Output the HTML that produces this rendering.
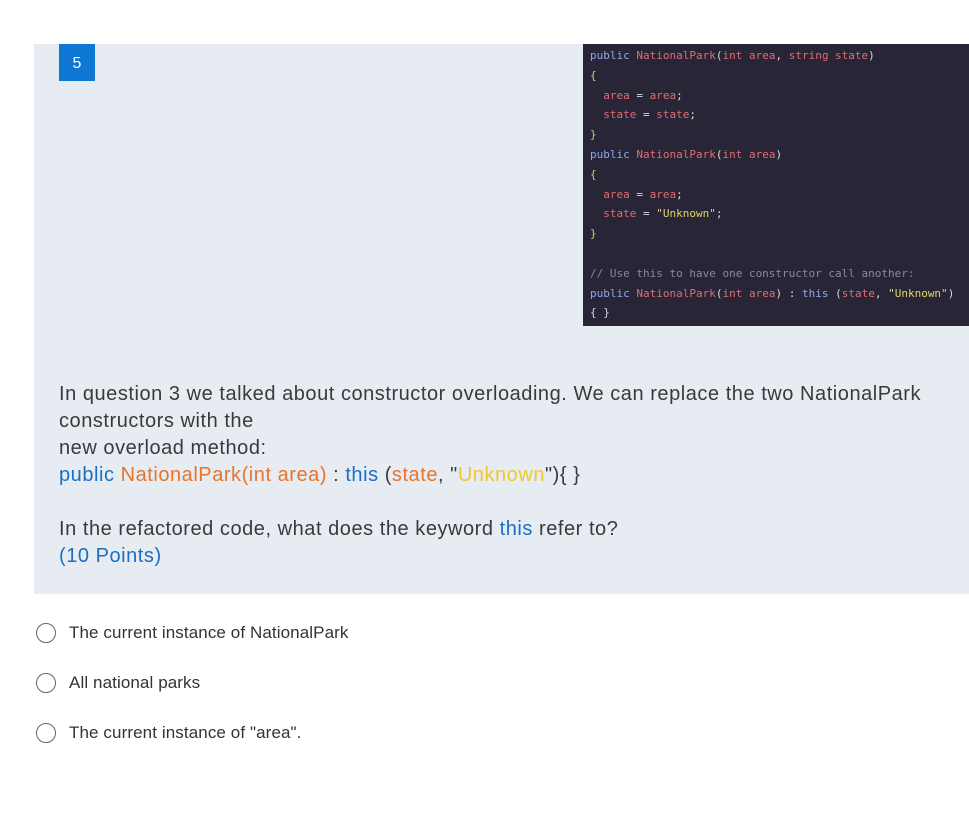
<!DOCTYPE html>
<html><head><meta charset="utf-8"><style>
body{margin:0;width:969px;height:830px;background:#fff;position:relative;overflow:hidden;font-family:"Liberation Sans",sans-serif}
.panel{position:absolute;left:34px;top:44px;width:935px;height:550px;background:#e6ecf2}
.badge{position:absolute;left:59px;top:44px;width:36px;height:37px;background:#0f78d4;color:#fff;font-size:16px;text-align:center;line-height:40px}
.code{position:absolute;left:583px;top:44px;width:386px;height:282px;background:#272536;font-family:"DejaVu Sans Mono",monospace;font-size:11px;line-height:19.8px;padding:2px 0 0 7px;box-sizing:border-box;white-space:pre;color:#e06c75}
.k{color:#8fa8f0}.p{color:#d8d8e8}.s{color:#e5d36a}.c{color:#8a8a9a}.b{color:#e0c070}
.txt{position:absolute;left:59px;top:381px;width:900px;font-size:20px;line-height:27px;color:#3a3a3a;letter-spacing:0.54px}
.bl{color:#1a6fc4}.or{color:#e6742c}.yl{color:#f0c82c}
.opt{position:absolute;left:36px;font-size:17px;color:#333;letter-spacing:0.1px}
.opt i{position:absolute;left:0;top:0;width:20px;height:20px;border:1.5px solid #666;border-radius:50%;box-sizing:border-box}
.opt span{position:absolute;left:33px;top:0;white-space:nowrap;line-height:20px}
</style></head><body>
<div class="panel"></div>
<div class="badge">5</div>
<div class="code"><span class="k">public</span> NationalPark<span class="p">(</span>int area<span class="p">,</span> string state<span class="p">)</span>
<span class="b">{</span>
  area <span class="p">=</span> area<span class="p">;</span>
  state <span class="p">=</span> state<span class="p">;</span>
<span class="b">}</span>
<span class="k">public</span> NationalPark<span class="p">(</span>int area<span class="p">)</span>
<span class="b">{</span>
  area <span class="p">=</span> area<span class="p">;</span>
  state <span class="p">=</span> <span class="s">"Unknown"</span><span class="p">;</span>
<span class="b">}</span>

<span class="c">// Use this to have one constructor call another:</span>
<span class="k">public</span> NationalPark<span class="p">(</span>int area<span class="p">)</span> <span class="p">:</span> <span class="k">this</span> <span class="p">(</span>state<span class="p">,</span> <span class="s">"Unknown"</span><span class="p">)</span>
<span class="p">{ }</span></div>
<div class="txt">In question 3 we talked about constructor overloading. We can replace the two NationalPark<br>constructors with the<br>new overload method:<br><span class="bl">public</span> <span class="or">NationalPark(int area)</span> : <span class="bl">this</span> (<span class="or">state</span>, "<span class="yl">Unknown</span>"){ }<br><br>In the refactored code, what does the keyword <span class="bl">this</span> refer to?<br><span class="bl">(10 Points)</span></div>
<div class="opt" style="top:623px"><i></i><span>The current instance of NationalPark</span></div>
<div class="opt" style="top:673px"><i></i><span>All national parks</span></div>
<div class="opt" style="top:723px"><i></i><span>The current instance of "area".</span></div>
</body></html>
